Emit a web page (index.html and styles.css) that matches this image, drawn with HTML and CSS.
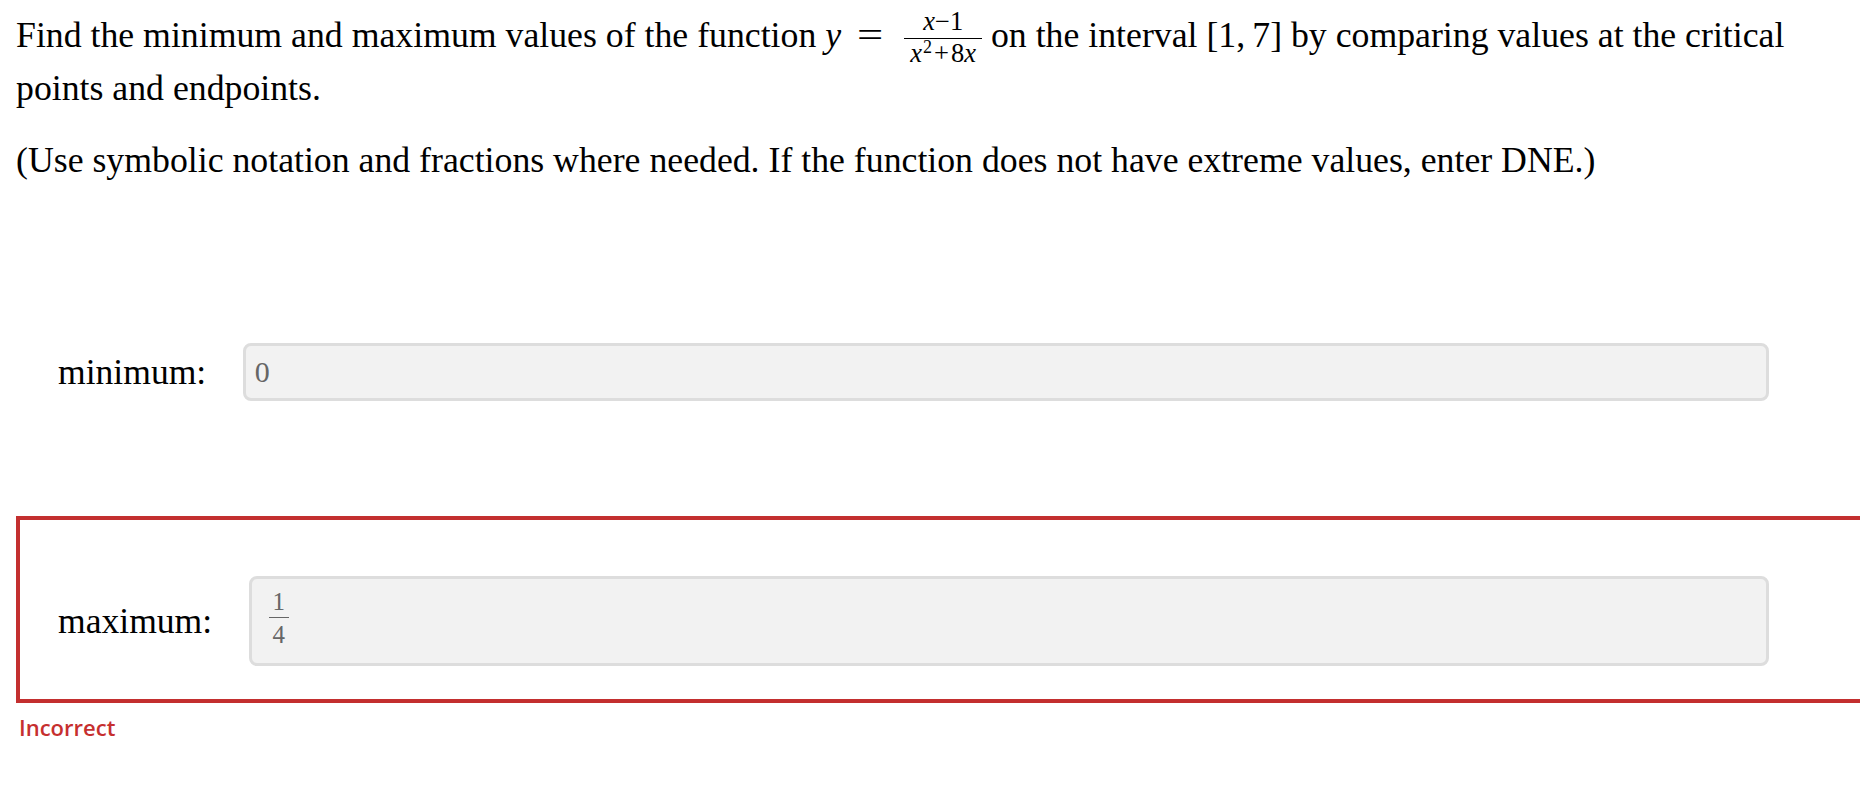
FILE: index.html
```html
<!DOCTYPE html>
<html lang="en">
<head>
<meta charset="utf-8">
<title>Extreme values</title>
<link rel="stylesheet" href="styles.css">
</head>
<body>
<div class="page">
  <p class="q q1">Find the minimum and maximum values of the function <span class="math"><i class="mi">y</i><span class="mo">=</span><span class="frac"><span class="num"><i>x</i>−1</span><span class="den"><i>x</i><span class="sup">2</span><span class="op">+</span>8<i>x</i></span></span></span> on the interval [1,&#8201;7] by comparing values at the critical points and endpoints.</p>
  <p class="q q2">(Use symbolic notation and fractions where needed. If the function does not have extreme values, enter DNE.)</p>

  <div class="ans ans-min">
    <span class="label">minimum:</span>
    <div class="field field-text">0</div>
  </div>

  <div class="ans ans-max">
    <span class="label">maximum:</span>
    <div class="field field-frac">
      <span class="ffrac"><span class="fn">1</span><span class="fd">4</span></span>
    </div>
  </div>

  <div class="feedback">Incorrect</div>
</div>
</body>
</html>
```

FILE: styles.css
```css
html, body {
  margin: 0;
  padding: 0;
  background: #ffffff;
}

body {
  overflow: hidden;
  font-family: "Liberation Serif", "Times New Roman", serif;
  color: #000000;
}

.page {
  padding-left: 16px;
}

.q {
  margin: 0;
  font-size: 35.75px;
  padding-right: 30px;
}

.q1 {
  line-height: 53px;
  padding-top: 8.5px;
}

.q2 {
  line-height: 41px;
  margin-top: 25px;
}

.math i,
.mi {
  font-family: "Liberation Serif", "Times New Roman", serif;
  font-style: italic;
}

.mo {
  display: inline-block;
  margin: 0 24px 0 19px;
  transform: scaleX(1.3);
}

.frac {
  display: inline-flex;
  flex-direction: column;
  vertical-align: 17px;
  font-size: 26.5px;
  margin-bottom: -8px;
}

.num {
  line-height: 20px;
  padding-bottom: 7.3px;
  text-align: center;
}

.den {
  line-height: 20px;
  border-top: 1.5px solid #000000;
  padding: 4.2px 6px 0;
  text-align: center;
}

.sup {
  font-size: 0.68em;
  vertical-align: 0.5em;
  line-height: 0;
  margin-left: 1px;
}

.op {
  margin: 0 2px;
}

.ans {
  display: flex;
  align-items: center;
  gap: 36.5px;
  border: 4px solid transparent;
  margin-right: -30px;
  padding: 56px 117px 32.5px 38px;
}

.ans-min {
  margin-top: 102.5px;
}

.ans-max {
  margin-top: 78.5px;
  border-color: #c32f2f;
}

.label {
  font-size: 35.6px;
  line-height: 41px;
  white-space: nowrap;
}

.field {
  flex: 1;
  border: 3px solid #dddddd;
  background: #f2f2f2;
  border-radius: 8px;
  color: #666666;
}

.field-text {
  font-size: 30px;
  line-height: 52px;
  padding-left: 9px;
}

.field-frac {
  display: flex;
  padding: 10px 0 16px 17px;
}

.ffrac {
  display: flex;
  flex-direction: column;
  font-size: 25px;
}

.fn {
  line-height: 25px;
  padding-bottom: 3px;
  text-align: center;
}

.fd {
  line-height: 25px;
  border-top: 1.5px solid #666666;
  padding: 4px 3.75px 0;
  text-align: center;
}

.feedback {
  font-family: "Open Sans", "Noto Sans", sans-serif;
  font-weight: 600;
  font-size: 22px;
  color: #c62f2f;
  margin-top: 9.5px;
  padding-left: 3px;
}
```
